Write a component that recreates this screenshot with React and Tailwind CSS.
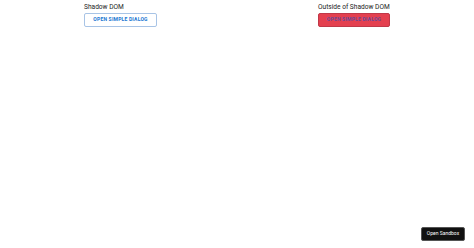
export default function App() {
  return (
    <div className="relative w-[474px] h-[248px] bg-white" style={{ fontFamily: "Roboto, 'Liberation Sans', sans-serif" }}>
      <div className="flex gap-[161px] pl-[84px] pt-[3px]">
        <div className="flex flex-col items-start w-[73px]">
          <div className="text-[6.6px] leading-[9px] text-[#222] whitespace-nowrap">Shadow DOM</div>
          <button className="mt-[1px] h-[14px] w-[73px] px-[4px] border border-[#a8c4e6] rounded-[2px] text-[5px] font-bold tracking-[0.2px] text-[#1976d2] uppercase bg-white whitespace-nowrap">
            Open Simple Dialog
          </button>
        </div>
        <div className="flex flex-col items-start w-[73px]">
          <div className="text-[6.6px] leading-[9px] text-[#222] whitespace-nowrap">Outside of Shadow DOM</div>
          <button className="mt-[1px] h-[14px] w-[72px] px-[4px] border border-[#c03848] rounded-[2px] text-[5px] font-bold tracking-[0.2px] text-[#6c4a98] uppercase bg-[#e4404f] whitespace-nowrap">
            Open Simple Dialog
          </button>
        </div>
      </div>
      <div className="absolute right-[9px] bottom-[7px] h-[14px] w-[44px] justify-center flex items-center rounded-[2px] bg-[#111] border border-[#555] text-white text-[5px] whitespace-nowrap">
        Open Sandbox
      </div>
    </div>
  );
}
